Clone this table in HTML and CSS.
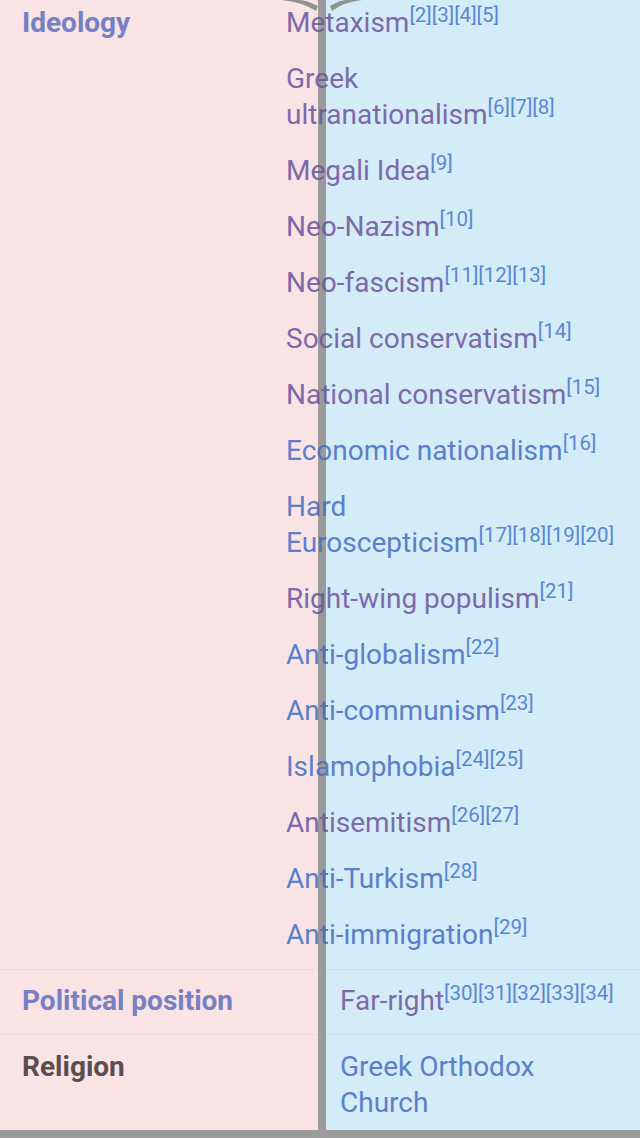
FILE: index.html
```html
<!DOCTYPE html>
<html lang="en">
<head>
<meta charset="utf-8">
<title>Infobox</title>
<link rel="stylesheet" href="styles.css">
</head>
<body>
<div class="infobox">
  <div class="row">
    <div class="label link">Ideology</div>
    <div class="value">
      <ul class="list">
        <li><a class="v">Metaxism</a><sup>[2][3][4][5]</sup></li>
        <li><a class="v">Greek ultranationalism</a><sup>[6][7][8]</sup></li>
        <li><a class="v">Megali Idea</a><sup>[9]</sup></li>
        <li><a class="v">Neo-Nazism</a><sup>[10]</sup></li>
        <li><a class="v">Neo-fascism</a><sup>[11][12][13]</sup></li>
        <li><a class="v">Social conservatism</a><sup>[14]</sup></li>
        <li><a class="v">National conservatism</a><sup>[15]</sup></li>
        <li><a class="u">Economic nationalism</a><sup>[16]</sup></li>
        <li><a class="u">Hard Euroscepticism</a><sup>[17][18][19][20]</sup></li>
        <li><a class="v">Right-wing populism</a><sup>[21]</sup></li>
        <li><a class="u">Anti-globalism</a><sup>[22]</sup></li>
        <li><a class="u">Anti-communism</a><sup>[23]</sup></li>
        <li><a class="u">Islamophobia</a><sup>[24][25]</sup></li>
        <li><a class="v">Antisemitism</a><sup>[26][27]</sup></li>
        <li><a class="u">Anti-Turkism</a><sup>[28]</sup></li>
        <li><a class="u">Anti-immigration</a><sup>[29]</sup></li>
      </ul>
    </div>
  </div>
  <div class="row sep">
    <div class="label link pad">Political position</div>
    <div class="value pad"><a class="v">Far-right</a><sup>[30][31][32][33][34]</sup></div>
  </div>
  <div class="row sep last">
    <div class="label plain pad">Religion</div>
    <div class="value pad"><a class="u">Greek Orthodox Church</a></div>
  </div>
  <div class="bar"></div>
  <svg class="arrow" width="90" height="14" viewBox="0 0 90 14" aria-hidden="true">
    <path d="M2 0 Q22 2 36 11 L38 6 Q26 0 20 0 Z" fill="#8e9590"/>
    <path d="M82 0 Q64 2 52 11 L50 6 Q60 0 66 0 Z" fill="#8e9590"/>
  </svg>
</div>
</body>
</html>
```

FILE: styles.css
```css
html, body {
  margin: 0;
  padding: 0;
  background: #9b9b9b;
}
body {
  font-family: Roboto, "Noto Sans", "Liberation Sans", sans-serif;
  font-size: 28px;
  width: 640px;
  height: 1138px;
  overflow: hidden;
}
.infobox {
  position: relative;
  display: flex;
  flex-direction: column;
  padding-bottom: 8px;
  background: #9b9b9b;
}
.row {
  display: grid;
  grid-template-columns: 318px 1fr;
  column-gap: 8px;
  background: #aeaeae;
}
.label {
  background: #f9e3e5;
  padding: 5px 0 0 22px;
  line-height: 36px;
  font-weight: 700;
}
.label.link { color: #7780c2; }
.label.plain { color: #5b4e4f; }
.value {
  background: #d4ecf8;
  padding: 0 14px 0 14px;
  line-height: 36px;
  color: #5b80c9;
}
.row.sep .label, .row.sep .value {
  border-top: 1px solid rgba(0, 0, 0, 0.035);
}
.label.pad, .value.pad { padding-top: 13px; padding-bottom: 15px; }
.row.last .label, .row.last .value { padding-top: 14px; padding-bottom: 9px; }
.list {
  list-style: none;
  margin: 0 0 0 -54px;
  padding: 5px 0 16px 0;
  display: flex;
  flex-direction: column;
  gap: 20px;
}
.list li { line-height: 36px; }
a.v { color: #7c6aa9; }
a.u { color: #5b80c9; }
sup {
  font-size: 20.5px;
  line-height: 0;
  vertical-align: 10px;
  color: #5a87d2;
  white-space: nowrap;
}
.bar {
  position: absolute;
  left: 318px;
  top: 0;
  width: 8px;
  bottom: 8px;
  background: #282838;
  opacity: 0.15;
}
.arrow {
  position: absolute;
  left: 280px;
  top: 0;
}
```
